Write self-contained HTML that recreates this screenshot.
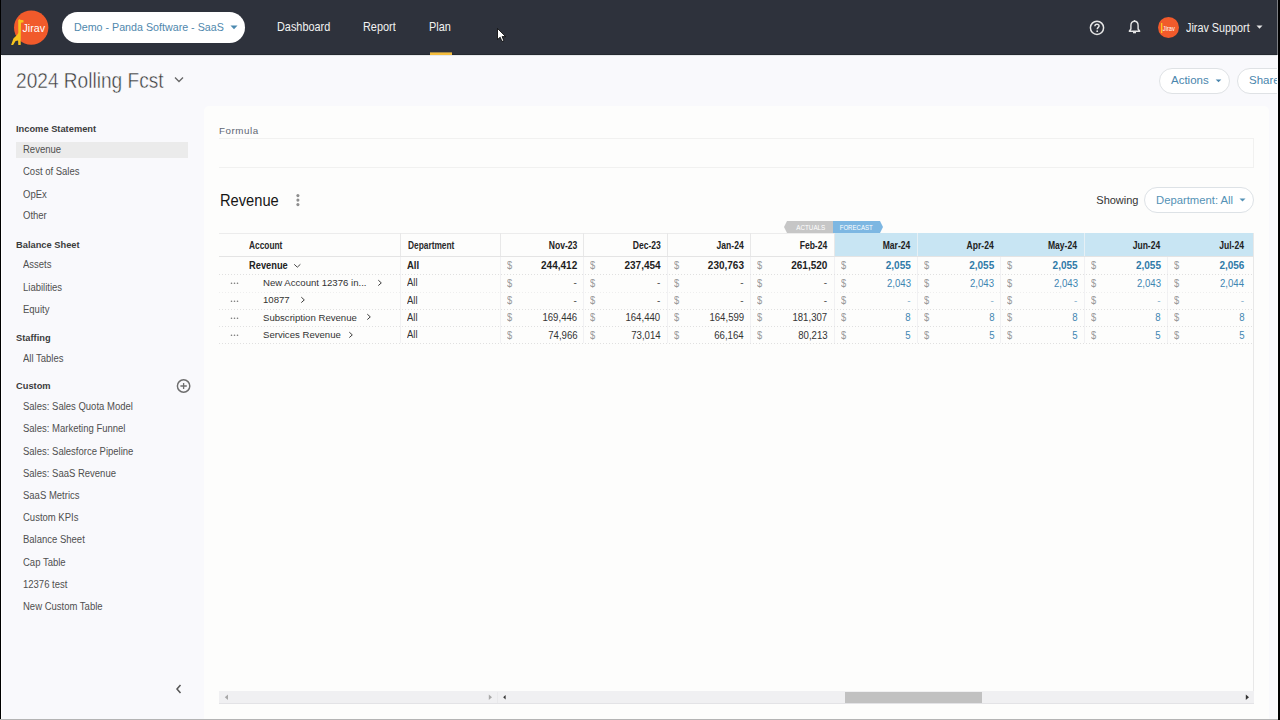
<!DOCTYPE html>
<html><head><meta charset="utf-8"><title>Jirav Plan</title>
<style>
html,body{margin:0;padding:0;}
body{width:1280px;height:720px;overflow:hidden;position:relative;background:#f9f9fc;font-family:"Liberation Sans", sans-serif;}
.t{position:absolute;white-space:nowrap;line-height:1;transform-origin:0 0;}
.r{position:absolute;box-sizing:border-box;}
svg{position:absolute;overflow:visible;}
</style></head><body>
<div class="r" style="left:0px;top:0px;width:1280px;height:55px;background:#2e323c"></div>
<div class="r" style="left:0px;top:54px;width:1280px;height:1px;background:#252930"></div>
<div class="r" style="left:0px;top:55px;width:1280px;height:1px;background:#e6e9ec"></div>
<svg style="left:0;top:0" width="60" height="55" viewBox="0 0 60 55">
<circle cx="31.2" cy="27.6" r="17.2" fill="#f15a2b"/>
<path d="M18.2 20.2 L19.3 19.1 L20.3 19.7 L23.4 20.3 L23.6 22.3 L21 22.8 L20.8 34 L20.7 45 L18.3 45 L18.1 40.6 L15.6 41 L13.1 45 L11.1 45 L13.4 38.6 L16.8 35.2 L18.3 33 Z" fill="#f7c41d"/>
<text x="22.5" y="32.4" font-family="Liberation Sans" font-size="11.5" fill="#fff" textLength="22.5" lengthAdjust="spacingAndGlyphs">Jirav</text>
</svg>
<div class="r" style="left:62px;top:12px;width:183px;height:31px;background:#fff;border-radius:16px"></div>
<div class="t" style="left:73.5px;top:21.83px;font-size:11.5px;color:#5088ad;font-weight:400;transform:scaleX(0.93);">Demo - Panda Software - SaaS</div>
<svg style="left:230px;top:25px" width="8" height="5"><path d="M0.5 0.5 L7.5 0.5 L4 4.2 Z" fill="#4c8ab0"/></svg>
<div class="t" style="left:276.5px;top:19.98px;font-size:13.2px;color:#f2f2f2;font-weight:400;transform:scaleX(0.825);">Dashboard</div>
<div class="t" style="left:363.3px;top:19.98px;font-size:13.2px;color:#f2f2f2;font-weight:400;transform:scaleX(0.825);">Report</div>
<div class="t" style="left:429.3px;top:19.98px;font-size:13.2px;color:#f2f2f2;font-weight:400;transform:scaleX(0.825);">Plan</div>
<div class="r" style="left:430px;top:52px;width:22px;height:1px;background:#a88a45"></div>
<div class="r" style="left:430px;top:53px;width:22px;height:2px;background:#f5bd3c"></div>
<svg style="left:497px;top:28px" width="12" height="16" viewBox="0 0 12 16"><path d="M0.5 0.5 L0.5 11.5 L3.2 9.2 L5 13.5 L6.8 12.7 L5.1 8.6 L8.6 8.6 Z" fill="#fff" stroke="#000" stroke-width="0.8"/></svg>
<svg style="left:1089px;top:20px" width="16" height="16" viewBox="0 0 16 16"><circle cx="8" cy="7.8" r="6.6" fill="none" stroke="#e6e6e6" stroke-width="1.5"/><path d="M5.9 6.2 C5.9 4.9 6.8 4.2 8 4.2 C9.2 4.2 10.1 5 10.1 6 C10.1 7.3 8.2 7.5 8.2 9.2" fill="none" stroke="#e6e6e6" stroke-width="1.4"/><circle cx="8.2" cy="11.2" r="0.9" fill="#e6e6e6"/></svg>
<svg style="left:1127px;top:19px" width="15" height="16" viewBox="0 0 15 16"><path d="M7.5 2.2 C5 2.2 3.9 4.2 3.9 6.5 L3.9 10 L2.3 12.2 L12.7 12.2 L11.1 10 L11.1 6.5 C11.1 4.2 10 2.2 7.5 2.2 Z" fill="none" stroke="#e6e6e6" stroke-width="1.4" stroke-linejoin="round"/><path d="M6 13.6 L9 13.6" stroke="#e6e6e6" stroke-width="1.4"/><circle cx="7.5" cy="1.8" r="0.8" fill="#e6e6e6"/></svg>
<svg style="left:1156px;top:16px" width="25" height="24" viewBox="0 0 25 24">
<circle cx="12.5" cy="11.5" r="10.5" fill="#f15a2b"/>
<rect x="5" y="7" width="1.3" height="10" fill="#f9c61f"/>
<text x="6.8" y="14.5" font-family="Liberation Sans" font-size="6.5" fill="#fff" textLength="12" lengthAdjust="spacingAndGlyphs">Jirav</text>
</svg>
<div class="t" style="left:1186px;top:21.60px;font-size:12px;color:#f2f2f2;font-weight:400;transform:scaleX(0.9);">Jirav Support</div>
<svg style="left:1256px;top:25px" width="8" height="5"><path d="M0.5 0.5 L6.5 0.5 L3.5 3.8 Z" fill="#e6e6e6"/></svg>
<div class="t" style="left:16.2px;top:69.64px;font-size:21.6px;color:#3a3a3a;font-weight:400;transform:scaleX(0.885);-webkit-text-stroke:0.45px #f9f9fc">2024 Rolling Fcst</div>
<svg style="left:174px;top:76px" width="10" height="8"><path d="M1 1.5 L5 5.5 L9 1.5" fill="none" stroke="#666" stroke-width="1.3"/></svg>
<div class="r" style="left:1159px;top:68px;width:71px;height:26px;background:#fff;border:1px solid #dfe2e5;border-radius:13px"></div>
<div class="t" style="left:1171px;top:74.52px;font-size:11.5px;color:#4a86ad;font-weight:400;transform:scaleX(1.0);">Actions</div>
<svg style="left:1215px;top:78.5px" width="8" height="5"><path d="M0.7 0.5 L6.3 0.5 L3.5 3.3 Z" fill="#4a86ad"/></svg>
<div class="r" style="left:1237px;top:68px;width:70px;height:26px;background:#fff;border:1px solid #dfe2e5;border-radius:13px"></div>
<div class="t" style="left:1249px;top:74.52px;font-size:11.5px;color:#4a86ad;font-weight:400;transform:scaleX(1.0);">Share</div>
<div class="r" style="left:16px;top:142px;width:172px;height:16px;background:#ebebeb"></div>
<div class="t" style="left:15.8px;top:124.16px;font-size:9.7px;color:#3c3c3c;font-weight:700;transform:scaleX(0.96);">Income Statement</div>
<div class="t" style="left:23px;top:144.80px;font-size:10px;color:#4f4f4f;font-weight:400;transform:scaleX(0.95);">Revenue</div>
<div class="t" style="left:23px;top:167.30px;font-size:10px;color:#4f4f4f;font-weight:400;transform:scaleX(0.95);">Cost of Sales</div>
<div class="t" style="left:23px;top:189.50px;font-size:10px;color:#4f4f4f;font-weight:400;transform:scaleX(0.95);">OpEx</div>
<div class="t" style="left:23px;top:211.20px;font-size:10px;color:#4f4f4f;font-weight:400;transform:scaleX(0.95);">Other</div>
<div class="t" style="left:15.8px;top:240.16px;font-size:9.7px;color:#3c3c3c;font-weight:700;transform:scaleX(0.96);">Balance Sheet</div>
<div class="t" style="left:23px;top:259.80px;font-size:10px;color:#4f4f4f;font-weight:400;transform:scaleX(0.95);">Assets</div>
<div class="t" style="left:23px;top:282.90px;font-size:10px;color:#4f4f4f;font-weight:400;transform:scaleX(0.95);">Liabilities</div>
<div class="t" style="left:23px;top:305.00px;font-size:10px;color:#4f4f4f;font-weight:400;transform:scaleX(0.95);">Equity</div>
<div class="t" style="left:15.8px;top:333.15px;font-size:9.7px;color:#3c3c3c;font-weight:700;transform:scaleX(0.96);">Staffing</div>
<div class="t" style="left:23px;top:353.70px;font-size:10px;color:#4f4f4f;font-weight:400;transform:scaleX(0.95);">All Tables</div>
<div class="t" style="left:15.8px;top:381.25px;font-size:9.7px;color:#3c3c3c;font-weight:700;transform:scaleX(0.96);">Custom</div>
<svg style="left:176px;top:378px" width="16" height="16" viewBox="0 0 16 16"><circle cx="7.6" cy="8" r="6.2" fill="none" stroke="#6e6e6e" stroke-width="1.45"/><path d="M7.6 5.1 L7.6 10.9 M4.4 8 L10.8 8" stroke="#6e6e6e" stroke-width="1.3"/></svg>
<div class="t" style="left:23px;top:402.20px;font-size:10px;color:#4f4f4f;font-weight:400;transform:scaleX(0.95);">Sales: Sales Quota Model</div>
<div class="t" style="left:23px;top:424.40px;font-size:10px;color:#4f4f4f;font-weight:400;transform:scaleX(0.95);">Sales: Marketing Funnel</div>
<div class="t" style="left:23px;top:446.60px;font-size:10px;color:#4f4f4f;font-weight:400;transform:scaleX(0.95);">Sales: Salesforce Pipeline</div>
<div class="t" style="left:23px;top:468.80px;font-size:10px;color:#4f4f4f;font-weight:400;transform:scaleX(0.95);">Sales: SaaS Revenue</div>
<div class="t" style="left:23px;top:491.00px;font-size:10px;color:#4f4f4f;font-weight:400;transform:scaleX(0.95);">SaaS Metrics</div>
<div class="t" style="left:23px;top:513.20px;font-size:10px;color:#4f4f4f;font-weight:400;transform:scaleX(0.95);">Custom KPIs</div>
<div class="t" style="left:23px;top:535.40px;font-size:10px;color:#4f4f4f;font-weight:400;transform:scaleX(0.95);">Balance Sheet</div>
<div class="t" style="left:23px;top:557.60px;font-size:10px;color:#4f4f4f;font-weight:400;transform:scaleX(0.95);">Cap Table</div>
<div class="t" style="left:23px;top:579.80px;font-size:10px;color:#4f4f4f;font-weight:400;transform:scaleX(0.95);">12376 test</div>
<div class="t" style="left:23px;top:602.00px;font-size:10px;color:#4f4f4f;font-weight:400;transform:scaleX(0.95);">New Custom Table</div>
<svg style="left:174px;top:683px" width="10" height="12"><path d="M6.5 2 L3 6 L6.5 10" fill="none" stroke="#555" stroke-width="1.5"/></svg>
<div class="r" style="left:204px;top:106px;width:1065px;height:620px;background:#fdfdfc;border-radius:5px"></div>
<div class="t" style="left:219px;top:125.87px;font-size:9.8px;color:#5f6773;font-weight:400;transform:scaleX(1.0);letter-spacing:0.55px">Formula</div>
<div class="r" style="left:219px;top:138px;width:1035px;height:30px;border:1px solid #f1f1f0;border-left:none"></div>
<div class="t" style="left:219.6px;top:191.97px;font-size:16.5px;color:#151515;font-weight:400;transform:scaleX(0.89);">Revenue</div>
<svg style="left:295px;top:193px" width="6" height="14"><circle cx="2.9" cy="2.6" r="1.55" fill="#8e8e8e"/><circle cx="2.9" cy="7.1" r="1.55" fill="#8e8e8e"/><circle cx="2.9" cy="11.6" r="1.55" fill="#8e8e8e"/></svg>
<div class="t" style="left:1096.3px;top:195.25px;font-size:11px;color:#333;font-weight:400;transform:scaleX(1.0);">Showing</div>
<div class="r" style="left:1144px;top:187px;width:110px;height:26px;background:#fff;border:1px solid #dde2e6;border-radius:13px"></div>
<div class="t" style="left:1156.4px;top:195.15px;font-size:11px;color:#5592b6;font-weight:400;transform:scaleX(1.025);">Department: All</div>
<svg style="left:1239px;top:198px" width="8" height="5"><path d="M0.5 0.5 L6.5 0.5 L3.5 3.6 Z" fill="#5592b6"/></svg>
<svg style="left:783px;top:220px" width="102" height="14" viewBox="0 0 102 14">
<path d="M4 1 L50 1 L50 13 L4 13 L1 7 Z" fill="#c6c6c6"/>
<path d="M50 1 L97 1 L100 7 L97 13 L50 13 Z" fill="#7db7e2"/>
<text x="13.3" y="9.6" font-family="Liberation Sans" font-size="6.3" fill="#fff" textLength="29" lengthAdjust="spacingAndGlyphs">ACTUALS</text>
<text x="56.7" y="9.6" font-family="Liberation Sans" font-size="6.3" fill="#fff" textLength="33" lengthAdjust="spacingAndGlyphs">FORECAST</text>
</svg>
<div class="r" style="left:834px;top:233px;width:420px;height:23px;background:#c8e5f3"></div>
<div class="r" style="left:219px;top:233px;width:615px;height:1px;background:#ececec"></div>
<div class="r" style="left:219px;top:256px;width:1035px;height:1px;background:#e4e4e4"></div>
<div class="r" style="left:399.5px;top:233px;width:1px;height:23px;background:#e8e8e8"></div>
<div class="r" style="left:399.5px;top:257px;width:1px;height:86px;background:#f1f1f3"></div>
<div class="r" style="left:500.0px;top:233px;width:1px;height:23px;background:#e8e8e8"></div>
<div class="r" style="left:500.0px;top:257px;width:1px;height:86px;background:#f1f1f3"></div>
<div class="r" style="left:583.4px;top:233px;width:1px;height:23px;background:#e8e8e8"></div>
<div class="r" style="left:583.4px;top:257px;width:1px;height:86px;background:#f1f1f3"></div>
<div class="r" style="left:666.8px;top:233px;width:1px;height:23px;background:#e8e8e8"></div>
<div class="r" style="left:666.8px;top:257px;width:1px;height:86px;background:#f1f1f3"></div>
<div class="r" style="left:750.2px;top:233px;width:1px;height:23px;background:#e8e8e8"></div>
<div class="r" style="left:750.2px;top:257px;width:1px;height:86px;background:#f1f1f3"></div>
<div class="r" style="left:833.6px;top:233px;width:1px;height:23px;background:#e8e8e8"></div>
<div class="r" style="left:833.6px;top:257px;width:1px;height:86px;background:#f1f1f3"></div>
<div class="r" style="left:917.0px;top:233px;width:1px;height:23px;background:#e6f0f5"></div>
<div class="r" style="left:917.0px;top:257px;width:1px;height:86px;background:#f1f1f3"></div>
<div class="r" style="left:1000.4000000000001px;top:257px;width:1px;height:86px;background:#f1f1f3"></div>
<div class="r" style="left:1083.8000000000002px;top:233px;width:1px;height:23px;background:#e6f0f5"></div>
<div class="r" style="left:1083.8000000000002px;top:257px;width:1px;height:86px;background:#f1f1f3"></div>
<div class="r" style="left:1167.2px;top:257px;width:1px;height:86px;background:#f1f1f3"></div>
<div class="r" style="left:1253px;top:233px;width:1px;height:458px;background:#e8e8e8"></div>
<div class="r" style="left:219px;top:274px;width:1035px;height:1px;background-image:linear-gradient(90deg,#e0e0e0 34%,transparent 34%);background-size:3px 1px"></div>
<div class="r" style="left:219px;top:292px;width:1035px;height:1px;background-image:linear-gradient(90deg,#eeeeee 34%,transparent 34%);background-size:3px 1px"></div>
<div class="r" style="left:219px;top:309px;width:1035px;height:1px;background-image:linear-gradient(90deg,#e0e0e0 34%,transparent 34%);background-size:3px 1px"></div>
<div class="r" style="left:219px;top:326px;width:1035px;height:1px;background-image:linear-gradient(90deg,#e0e0e0 34%,transparent 34%);background-size:3px 1px"></div>
<div class="r" style="left:219px;top:343px;width:1035px;height:1px;background-image:linear-gradient(90deg,#e0e0e0 34%,transparent 34%);background-size:3px 1px"></div>
<div class="t" style="left:248.5px;top:240.50px;font-size:10px;color:#2a2a2a;font-weight:700;transform:scaleX(0.835);">Account</div>
<div class="t" style="left:407.8px;top:240.50px;font-size:10px;color:#2a2a2a;font-weight:700;transform:scaleX(0.835);">Department</div>
<div class="t" style="right:703.1px;top:240.50px;font-size:10px;color:#222;font-weight:700;transform:scaleX(0.855);transform-origin:100% 0;">Nov-23</div>
<div class="t" style="right:619.7px;top:240.50px;font-size:10px;color:#222;font-weight:700;transform:scaleX(0.855);transform-origin:100% 0;">Dec-23</div>
<div class="t" style="right:536.3px;top:240.50px;font-size:10px;color:#222;font-weight:700;transform:scaleX(0.855);transform-origin:100% 0;">Jan-24</div>
<div class="t" style="right:452.9px;top:240.50px;font-size:10px;color:#222;font-weight:700;transform:scaleX(0.855);transform-origin:100% 0;">Feb-24</div>
<div class="t" style="right:369.5px;top:240.50px;font-size:10px;color:#222;font-weight:700;transform:scaleX(0.855);transform-origin:100% 0;">Mar-24</div>
<div class="t" style="right:286.0999999999999px;top:240.50px;font-size:10px;color:#222;font-weight:700;transform:scaleX(0.855);transform-origin:100% 0;">Apr-24</div>
<div class="t" style="right:202.69999999999982px;top:240.50px;font-size:10px;color:#222;font-weight:700;transform:scaleX(0.855);transform-origin:100% 0;">May-24</div>
<div class="t" style="right:119.29999999999995px;top:240.50px;font-size:10px;color:#222;font-weight:700;transform:scaleX(0.855);transform-origin:100% 0;">Jun-24</div>
<div class="t" style="right:35.90000000000009px;top:240.50px;font-size:10px;color:#222;font-weight:700;transform:scaleX(0.855);transform-origin:100% 0;">Jul-24</div>
<div class="t" style="left:248.5px;top:261.10px;font-size:10px;color:#222;font-weight:700;transform:scaleX(0.93);">Revenue</div>
<svg style="left:293px;top:263.3px" width="9" height="6"><path d="M1.2 1.3 L4.3 4.2 L7.4 1.3" fill="none" stroke="#333" stroke-width="0.9"/></svg>
<div class="t" style="left:407px;top:260.70px;font-size:10px;color:#222;font-weight:700;transform:scaleX(0.95);">All</div>
<div class="t" style="left:507.0px;top:260.35px;font-size:11px;color:#999;font-weight:400;transform:scaleX(0.85);">$</div>
<div class="t" style="right:702.8000000000001px;top:261.30px;font-size:10px;color:#1e1e1e;font-weight:700;transform:scaleX(1.0);transform-origin:100% 0;">244,412</div>
<div class="t" style="left:590.4px;top:260.35px;font-size:11px;color:#999;font-weight:400;transform:scaleX(0.85);">$</div>
<div class="t" style="right:619.4000000000001px;top:261.30px;font-size:10px;color:#1e1e1e;font-weight:700;transform:scaleX(1.0);transform-origin:100% 0;">237,454</div>
<div class="t" style="left:673.8px;top:260.35px;font-size:11px;color:#999;font-weight:400;transform:scaleX(0.85);">$</div>
<div class="t" style="right:536.0px;top:261.30px;font-size:10px;color:#1e1e1e;font-weight:700;transform:scaleX(1.0);transform-origin:100% 0;">230,763</div>
<div class="t" style="left:757.2px;top:260.35px;font-size:11px;color:#999;font-weight:400;transform:scaleX(0.85);">$</div>
<div class="t" style="right:452.6px;top:261.30px;font-size:10px;color:#1e1e1e;font-weight:700;transform:scaleX(1.0);transform-origin:100% 0;">261,520</div>
<div class="t" style="left:840.6px;top:260.35px;font-size:11px;color:#999;font-weight:400;transform:scaleX(0.85);">$</div>
<div class="t" style="right:369.20000000000005px;top:261.30px;font-size:10px;color:#2f7aa8;font-weight:700;transform:scaleX(1.0);transform-origin:100% 0;">2,055</div>
<div class="t" style="left:924.0px;top:260.35px;font-size:11px;color:#999;font-weight:400;transform:scaleX(0.85);">$</div>
<div class="t" style="right:285.79999999999995px;top:261.30px;font-size:10px;color:#2f7aa8;font-weight:700;transform:scaleX(1.0);transform-origin:100% 0;">2,055</div>
<div class="t" style="left:1007.4000000000001px;top:260.35px;font-size:11px;color:#999;font-weight:400;transform:scaleX(0.85);">$</div>
<div class="t" style="right:202.39999999999986px;top:261.30px;font-size:10px;color:#2f7aa8;font-weight:700;transform:scaleX(1.0);transform-origin:100% 0;">2,055</div>
<div class="t" style="left:1090.8000000000002px;top:260.35px;font-size:11px;color:#999;font-weight:400;transform:scaleX(0.85);">$</div>
<div class="t" style="right:119.0px;top:261.30px;font-size:10px;color:#2f7aa8;font-weight:700;transform:scaleX(1.0);transform-origin:100% 0;">2,055</div>
<div class="t" style="left:1174.2px;top:260.35px;font-size:11px;color:#999;font-weight:400;transform:scaleX(0.85);">$</div>
<div class="t" style="right:35.600000000000136px;top:261.30px;font-size:10px;color:#2f7aa8;font-weight:700;transform:scaleX(1.0);transform-origin:100% 0;">2,056</div>
<svg style="left:230px;top:282.1px" width="10" height="3"><circle cx="1.5" cy="1.2" r="0.8" fill="#777"/><circle cx="4.5" cy="1.2" r="0.8" fill="#777"/><circle cx="7.5" cy="1.2" r="0.8" fill="#777"/></svg>
<div class="t" style="left:263px;top:277.84px;font-size:9.6px;color:#333;font-weight:400;transform:scaleX(1.0);">New Account 12376 in...</div>
<svg style="left:377px;top:278.6px" width="6" height="8"><path d="M1.3 1.2 L4.3 3.9 L1.3 6.6" fill="none" stroke="#333" stroke-width="0.95"/></svg>
<div class="t" style="left:407px;top:278.20px;font-size:10px;color:#333;font-weight:400;transform:scaleX(0.95);">All</div>
<div class="t" style="left:507.0px;top:277.65px;font-size:11px;color:#999;font-weight:400;transform:scaleX(0.85);">$</div>
<div class="t" style="right:703.1px;top:278.10px;font-size:10px;color:#555;font-weight:400;">-</div>
<div class="t" style="left:590.4px;top:277.65px;font-size:11px;color:#999;font-weight:400;transform:scaleX(0.85);">$</div>
<div class="t" style="right:619.7px;top:278.10px;font-size:10px;color:#555;font-weight:400;">-</div>
<div class="t" style="left:673.8px;top:277.65px;font-size:11px;color:#999;font-weight:400;transform:scaleX(0.85);">$</div>
<div class="t" style="right:536.3px;top:278.10px;font-size:10px;color:#555;font-weight:400;">-</div>
<div class="t" style="left:757.2px;top:277.65px;font-size:11px;color:#999;font-weight:400;transform:scaleX(0.85);">$</div>
<div class="t" style="right:452.9px;top:278.10px;font-size:10px;color:#555;font-weight:400;">-</div>
<div class="t" style="left:840.6px;top:277.65px;font-size:11px;color:#999;font-weight:400;transform:scaleX(0.85);">$</div>
<div class="t" style="right:369.20000000000005px;top:278.60px;font-size:10px;color:#3f86b2;font-weight:400;transform:scaleX(0.96);transform-origin:100% 0;">2,043</div>
<div class="t" style="left:924.0px;top:277.65px;font-size:11px;color:#999;font-weight:400;transform:scaleX(0.85);">$</div>
<div class="t" style="right:285.79999999999995px;top:278.60px;font-size:10px;color:#3f86b2;font-weight:400;transform:scaleX(0.96);transform-origin:100% 0;">2,043</div>
<div class="t" style="left:1007.4000000000001px;top:277.65px;font-size:11px;color:#999;font-weight:400;transform:scaleX(0.85);">$</div>
<div class="t" style="right:202.39999999999986px;top:278.60px;font-size:10px;color:#3f86b2;font-weight:400;transform:scaleX(0.96);transform-origin:100% 0;">2,043</div>
<div class="t" style="left:1090.8000000000002px;top:277.65px;font-size:11px;color:#999;font-weight:400;transform:scaleX(0.85);">$</div>
<div class="t" style="right:119.0px;top:278.60px;font-size:10px;color:#3f86b2;font-weight:400;transform:scaleX(0.96);transform-origin:100% 0;">2,043</div>
<div class="t" style="left:1174.2px;top:277.65px;font-size:11px;color:#999;font-weight:400;transform:scaleX(0.85);">$</div>
<div class="t" style="right:35.600000000000136px;top:278.60px;font-size:10px;color:#3f86b2;font-weight:400;transform:scaleX(0.96);transform-origin:100% 0;">2,044</div>
<svg style="left:230px;top:299.6px" width="10" height="3"><circle cx="1.5" cy="1.2" r="0.8" fill="#777"/><circle cx="4.5" cy="1.2" r="0.8" fill="#777"/><circle cx="7.5" cy="1.2" r="0.8" fill="#777"/></svg>
<div class="t" style="left:263px;top:295.34px;font-size:9.6px;color:#333;font-weight:400;transform:scaleX(1.0);">10877</div>
<svg style="left:299.5px;top:296.1px" width="6" height="8"><path d="M1.3 1.2 L4.3 3.9 L1.3 6.6" fill="none" stroke="#333" stroke-width="0.95"/></svg>
<div class="t" style="left:407px;top:295.70px;font-size:10px;color:#333;font-weight:400;transform:scaleX(0.95);">All</div>
<div class="t" style="left:507.0px;top:295.15px;font-size:11px;color:#999;font-weight:400;transform:scaleX(0.85);">$</div>
<div class="t" style="right:703.1px;top:295.60px;font-size:10px;color:#555;font-weight:400;">-</div>
<div class="t" style="left:590.4px;top:295.15px;font-size:11px;color:#999;font-weight:400;transform:scaleX(0.85);">$</div>
<div class="t" style="right:619.7px;top:295.60px;font-size:10px;color:#555;font-weight:400;">-</div>
<div class="t" style="left:673.8px;top:295.15px;font-size:11px;color:#999;font-weight:400;transform:scaleX(0.85);">$</div>
<div class="t" style="right:536.3px;top:295.60px;font-size:10px;color:#555;font-weight:400;">-</div>
<div class="t" style="left:757.2px;top:295.15px;font-size:11px;color:#999;font-weight:400;transform:scaleX(0.85);">$</div>
<div class="t" style="right:452.9px;top:295.60px;font-size:10px;color:#555;font-weight:400;">-</div>
<div class="t" style="left:840.6px;top:295.15px;font-size:11px;color:#999;font-weight:400;transform:scaleX(0.85);">$</div>
<div class="t" style="right:369.5px;top:295.60px;font-size:10px;color:#8fb6d0;font-weight:400;">-</div>
<div class="t" style="left:924.0px;top:295.15px;font-size:11px;color:#999;font-weight:400;transform:scaleX(0.85);">$</div>
<div class="t" style="right:286.0999999999999px;top:295.60px;font-size:10px;color:#8fb6d0;font-weight:400;">-</div>
<div class="t" style="left:1007.4000000000001px;top:295.15px;font-size:11px;color:#999;font-weight:400;transform:scaleX(0.85);">$</div>
<div class="t" style="right:202.69999999999982px;top:295.60px;font-size:10px;color:#8fb6d0;font-weight:400;">-</div>
<div class="t" style="left:1090.8000000000002px;top:295.15px;font-size:11px;color:#999;font-weight:400;transform:scaleX(0.85);">$</div>
<div class="t" style="right:119.29999999999995px;top:295.60px;font-size:10px;color:#8fb6d0;font-weight:400;">-</div>
<div class="t" style="left:1174.2px;top:295.15px;font-size:11px;color:#999;font-weight:400;transform:scaleX(0.85);">$</div>
<div class="t" style="right:35.90000000000009px;top:295.60px;font-size:10px;color:#8fb6d0;font-weight:400;">-</div>
<svg style="left:230px;top:316.8px" width="10" height="3"><circle cx="1.5" cy="1.2" r="0.8" fill="#777"/><circle cx="4.5" cy="1.2" r="0.8" fill="#777"/><circle cx="7.5" cy="1.2" r="0.8" fill="#777"/></svg>
<div class="t" style="left:263px;top:312.54px;font-size:9.6px;color:#333;font-weight:400;transform:scaleX(1.0);">Subscription Revenue</div>
<svg style="left:365.5px;top:313.3px" width="6" height="8"><path d="M1.3 1.2 L4.3 3.9 L1.3 6.6" fill="none" stroke="#333" stroke-width="0.95"/></svg>
<div class="t" style="left:407px;top:312.90px;font-size:10px;color:#333;font-weight:400;transform:scaleX(0.95);">All</div>
<div class="t" style="left:507.0px;top:312.35px;font-size:11px;color:#999;font-weight:400;transform:scaleX(0.85);">$</div>
<div class="t" style="right:702.8000000000001px;top:313.30px;font-size:10px;color:#333;font-weight:400;transform:scaleX(0.96);transform-origin:100% 0;">169,446</div>
<div class="t" style="left:590.4px;top:312.35px;font-size:11px;color:#999;font-weight:400;transform:scaleX(0.85);">$</div>
<div class="t" style="right:619.4000000000001px;top:313.30px;font-size:10px;color:#333;font-weight:400;transform:scaleX(0.96);transform-origin:100% 0;">164,440</div>
<div class="t" style="left:673.8px;top:312.35px;font-size:11px;color:#999;font-weight:400;transform:scaleX(0.85);">$</div>
<div class="t" style="right:536.0px;top:313.30px;font-size:10px;color:#333;font-weight:400;transform:scaleX(0.96);transform-origin:100% 0;">164,599</div>
<div class="t" style="left:757.2px;top:312.35px;font-size:11px;color:#999;font-weight:400;transform:scaleX(0.85);">$</div>
<div class="t" style="right:452.6px;top:313.30px;font-size:10px;color:#333;font-weight:400;transform:scaleX(0.96);transform-origin:100% 0;">181,307</div>
<div class="t" style="left:840.6px;top:312.35px;font-size:11px;color:#999;font-weight:400;transform:scaleX(0.85);">$</div>
<div class="t" style="right:369.20000000000005px;top:313.30px;font-size:10px;color:#3f86b2;font-weight:400;transform:scaleX(0.96);transform-origin:100% 0;">8</div>
<div class="t" style="left:924.0px;top:312.35px;font-size:11px;color:#999;font-weight:400;transform:scaleX(0.85);">$</div>
<div class="t" style="right:285.79999999999995px;top:313.30px;font-size:10px;color:#3f86b2;font-weight:400;transform:scaleX(0.96);transform-origin:100% 0;">8</div>
<div class="t" style="left:1007.4000000000001px;top:312.35px;font-size:11px;color:#999;font-weight:400;transform:scaleX(0.85);">$</div>
<div class="t" style="right:202.39999999999986px;top:313.30px;font-size:10px;color:#3f86b2;font-weight:400;transform:scaleX(0.96);transform-origin:100% 0;">8</div>
<div class="t" style="left:1090.8000000000002px;top:312.35px;font-size:11px;color:#999;font-weight:400;transform:scaleX(0.85);">$</div>
<div class="t" style="right:119.0px;top:313.30px;font-size:10px;color:#3f86b2;font-weight:400;transform:scaleX(0.96);transform-origin:100% 0;">8</div>
<div class="t" style="left:1174.2px;top:312.35px;font-size:11px;color:#999;font-weight:400;transform:scaleX(0.85);">$</div>
<div class="t" style="right:35.600000000000136px;top:313.30px;font-size:10px;color:#3f86b2;font-weight:400;transform:scaleX(0.96);transform-origin:100% 0;">8</div>
<svg style="left:230px;top:334.0px" width="10" height="3"><circle cx="1.5" cy="1.2" r="0.8" fill="#777"/><circle cx="4.5" cy="1.2" r="0.8" fill="#777"/><circle cx="7.5" cy="1.2" r="0.8" fill="#777"/></svg>
<div class="t" style="left:263px;top:329.74px;font-size:9.6px;color:#333;font-weight:400;transform:scaleX(1.0);">Services Revenue</div>
<svg style="left:347.5px;top:330.5px" width="6" height="8"><path d="M1.3 1.2 L4.3 3.9 L1.3 6.6" fill="none" stroke="#333" stroke-width="0.95"/></svg>
<div class="t" style="left:407px;top:330.10px;font-size:10px;color:#333;font-weight:400;transform:scaleX(0.95);">All</div>
<div class="t" style="left:507.0px;top:329.55px;font-size:11px;color:#999;font-weight:400;transform:scaleX(0.85);">$</div>
<div class="t" style="right:702.8000000000001px;top:330.50px;font-size:10px;color:#333;font-weight:400;transform:scaleX(0.96);transform-origin:100% 0;">74,966</div>
<div class="t" style="left:590.4px;top:329.55px;font-size:11px;color:#999;font-weight:400;transform:scaleX(0.85);">$</div>
<div class="t" style="right:619.4000000000001px;top:330.50px;font-size:10px;color:#333;font-weight:400;transform:scaleX(0.96);transform-origin:100% 0;">73,014</div>
<div class="t" style="left:673.8px;top:329.55px;font-size:11px;color:#999;font-weight:400;transform:scaleX(0.85);">$</div>
<div class="t" style="right:536.0px;top:330.50px;font-size:10px;color:#333;font-weight:400;transform:scaleX(0.96);transform-origin:100% 0;">66,164</div>
<div class="t" style="left:757.2px;top:329.55px;font-size:11px;color:#999;font-weight:400;transform:scaleX(0.85);">$</div>
<div class="t" style="right:452.6px;top:330.50px;font-size:10px;color:#333;font-weight:400;transform:scaleX(0.96);transform-origin:100% 0;">80,213</div>
<div class="t" style="left:840.6px;top:329.55px;font-size:11px;color:#999;font-weight:400;transform:scaleX(0.85);">$</div>
<div class="t" style="right:369.20000000000005px;top:330.50px;font-size:10px;color:#3f86b2;font-weight:400;transform:scaleX(0.96);transform-origin:100% 0;">5</div>
<div class="t" style="left:924.0px;top:329.55px;font-size:11px;color:#999;font-weight:400;transform:scaleX(0.85);">$</div>
<div class="t" style="right:285.79999999999995px;top:330.50px;font-size:10px;color:#3f86b2;font-weight:400;transform:scaleX(0.96);transform-origin:100% 0;">5</div>
<div class="t" style="left:1007.4000000000001px;top:329.55px;font-size:11px;color:#999;font-weight:400;transform:scaleX(0.85);">$</div>
<div class="t" style="right:202.39999999999986px;top:330.50px;font-size:10px;color:#3f86b2;font-weight:400;transform:scaleX(0.96);transform-origin:100% 0;">5</div>
<div class="t" style="left:1090.8000000000002px;top:329.55px;font-size:11px;color:#999;font-weight:400;transform:scaleX(0.85);">$</div>
<div class="t" style="right:119.0px;top:330.50px;font-size:10px;color:#3f86b2;font-weight:400;transform:scaleX(0.96);transform-origin:100% 0;">5</div>
<div class="t" style="left:1174.2px;top:329.55px;font-size:11px;color:#999;font-weight:400;transform:scaleX(0.85);">$</div>
<div class="t" style="right:35.600000000000136px;top:330.50px;font-size:10px;color:#3f86b2;font-weight:400;transform:scaleX(0.96);transform-origin:100% 0;">5</div>
<div class="r" style="left:219px;top:691px;width:1035px;height:13px;background:#f0f0f2;border-bottom:1px solid #e3e3e6"></div>
<div class="r" style="left:497px;top:692px;width:1px;height:11px;background:#e9e9eb"></div>
<div class="r" style="left:845px;top:692px;width:137px;height:11px;background:#c1c1c1"></div>
<svg style="left:224px;top:694px" width="5" height="7"><path d="M4 0.5 L4 6 L0.8 3.3 Z" fill="#a8a8a8"/></svg>
<svg style="left:488px;top:694px" width="5" height="7"><path d="M0.8 0.5 L0.8 6 L4 3.3 Z" fill="#a8a8a8"/></svg>
<svg style="left:502px;top:694px" width="5" height="7"><path d="M3.6 1 L3.6 5.6 L1.2 3.3 Z" fill="#333"/></svg>
<svg style="left:1245px;top:694px" width="5" height="7"><path d="M0.8 0.5 L0.8 6 L4 3.3 Z" fill="#333"/></svg>
<div class="r" style="left:0px;top:0px;width:1px;height:720px;background:#000"></div>
<div class="r" style="left:1px;top:55px;width:1px;height:664px;background:#fff"></div>
<div class="r" style="left:1278px;top:0px;width:2px;height:720px;background:#000"></div>
<div class="r" style="left:1277px;top:0px;width:1px;height:55px;background:#7d7f84"></div>
<div class="r" style="left:1277px;top:55px;width:1px;height:664px;background:#fdfdfe"></div>
<div class="r" style="left:0px;top:719px;width:1278px;height:1px;background:#b4b4b4"></div>
</body></html>
